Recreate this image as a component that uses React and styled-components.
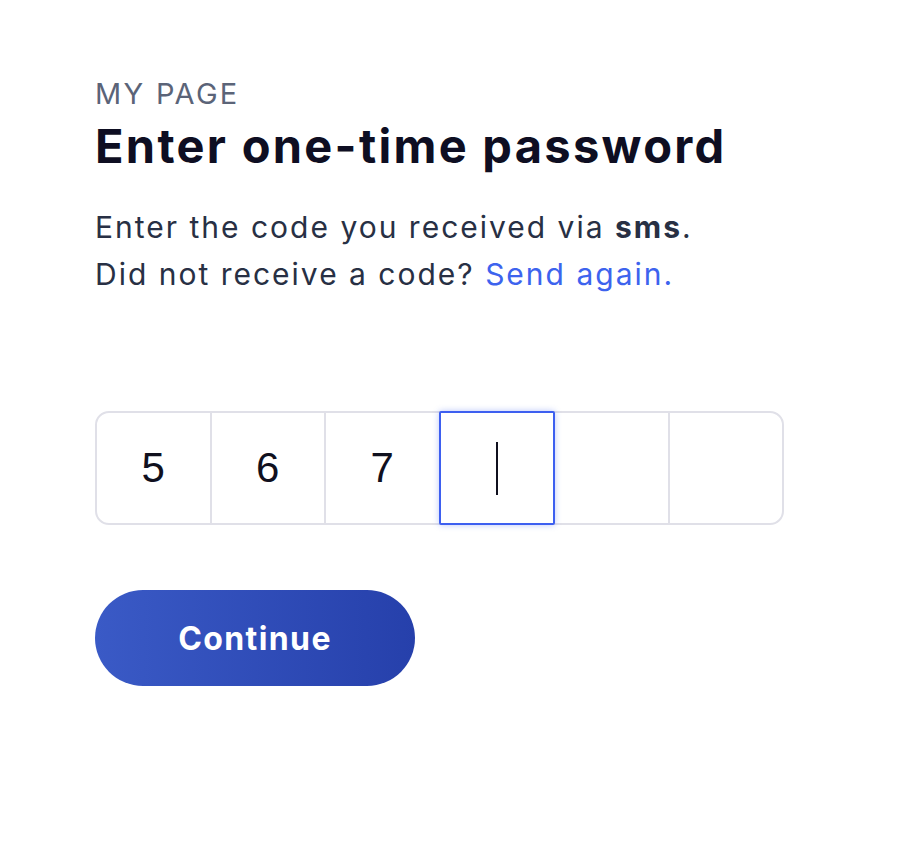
import React, { useState } from "react";
import styled, { createGlobalStyle } from "styled-components";

const GlobalStyle = createGlobalStyle`
    body {
        margin: 0;
        background: #fff;
        font-family: 'Inter', 'Noto Sans', sans-serif;
    }
`;

const Page = styled.div`
    padding: 76px 0 0 95px;
`;

const Eyebrow = styled.div`
    color: #5b6478;
    font-size: 29px;
    font-weight: 400;
    letter-spacing: 2.3px;
    line-height: 36px;
`;

const Title = styled.h1`
    margin: 4px 0 0 0;
    color: #0e0e22;
    font-size: 47px;
    font-weight: 700;
    letter-spacing: 2.3px;
    line-height: 60px;
`;

const Text = styled.p`
    margin: 28px 0 0 0;
    color: #283044;
    font-size: 30px;
    letter-spacing: 2px;
    line-height: 47px;

    b {
        font-weight: 700;
    }
`;

const Link = styled.a`
    color: #3d63ee;
    text-decoration: none;
    cursor: pointer;
`;

const CodeRow = styled.div`
    display: flex;
    width: 689px;
    height: 114px;
    margin-top: 113px;
    border: 2px solid #e0e0e8;
    border-radius: 14px;
    box-sizing: border-box;
`;

const Cell = styled.div`
    flex: 1;
    display: flex;
    align-items: center;
    justify-content: center;
    position: relative;
    font-family: 'Liberation Sans', Arial, sans-serif;
    font-size: 42px;
    color: #10101e;
    border-left: 2px solid #e0e0e8;

    &:first-child {
        border-left: none;
    }

    ${(p) => p.active && `
        &::after {
            content: '';
            position: absolute;
            top: -2px;
            bottom: -2px;
            left: -2px;
            right: -2px;
            border: 2px solid #3d5ff0;
            border-radius: 2px;
            box-shadow: 0 0 6px rgba(61, 95, 240, 0.35);
            z-index: 1;
        }
    `}
`;

const Caret = styled.span`
    width: 2px;
    height: 53px;
    background: #10101e;
`;

const Button = styled.button`
    margin-top: 65px;
    width: 320px;
    height: 96px;
    border: none;
    border-radius: 48px;
    background: linear-gradient(90deg, #3a5ac6 0%, #2640ab 100%);
    color: #fff;
    font-family: inherit;
    font-size: 32px;
    font-weight: 700;
    letter-spacing: 1.4px;
    cursor: pointer;
`;

const App = () => {
    const [code] = useState(["5", "6", "7", "", "", ""]);
    const active = 3;

    return (
        <>
            <GlobalStyle />
            <Page>
                <Eyebrow>MY PAGE</Eyebrow>
                <Title>Enter one-time password</Title>
                <Text>
                    Enter the code you received via <b>sms</b>.<br />
                    Did not receive a code? <Link>Send again.</Link>
                </Text>
                <CodeRow>
                    {code.map((d, i) => (
                        <Cell key={i} active={i === active}>
                            {i === active ? <Caret /> : d}
                        </Cell>
                    ))}
                </CodeRow>
                <Button>Continue</Button>
            </Page>
        </>
    );
};

export default App;
